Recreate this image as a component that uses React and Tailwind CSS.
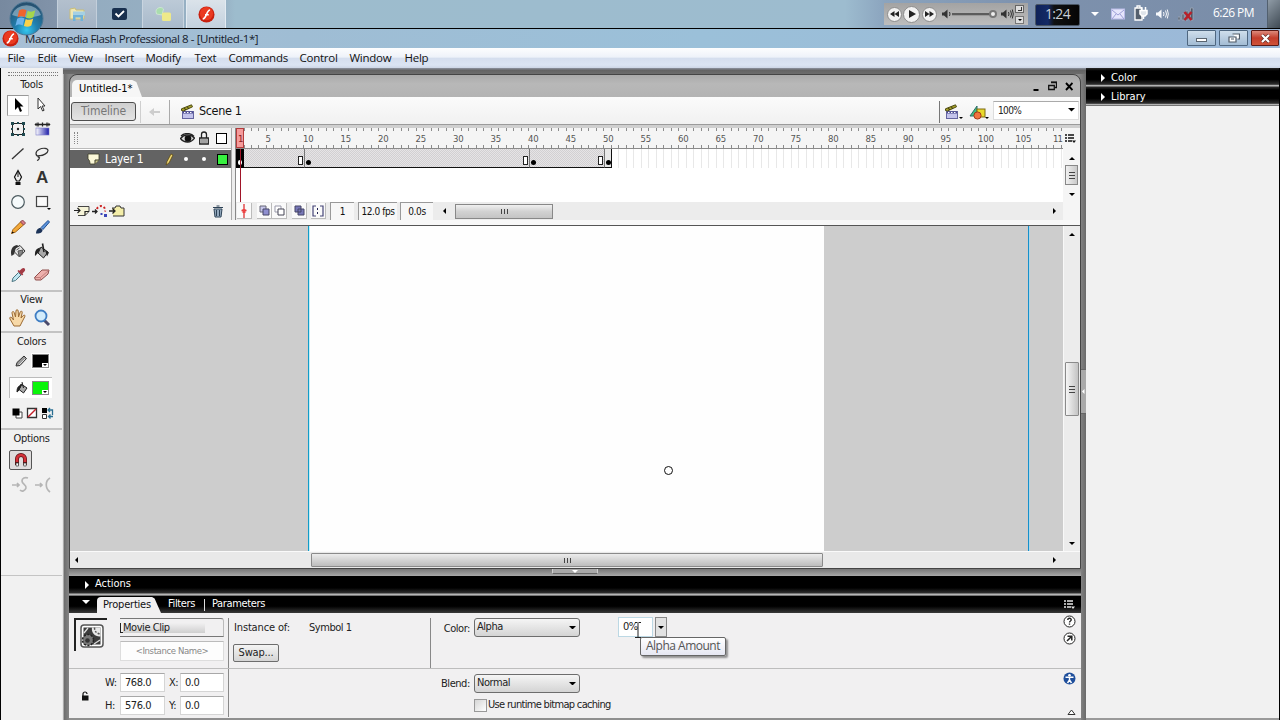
import React from 'react';

const MENUS = [
  ['File', 'w-[30px]'],
  ['Edit', 'w-[31px]'],
  ['View', 'w-[36px]'],
  ['Insert', 'w-[41px]'],
  ['Modify', 'w-[49px]'],
  ['Text', 'w-[34px]'],
  ['Commands', 'w-[71px]'],
  ['Control', 'w-[50px]'],
  ['Window', 'w-[55px]'],
  ['Help', 'w-[40px]'],
];

const RULER = Array.from({ length: 21 }, (_, i) => (i + 1) * 5);

const Svg = ({ w = 18, h = 18, className = '', children }) => (
  <svg width={w} height={h} viewBox={`0 0 ${w} ${h}`} className={`block shrink-0 ${className}`} fill="none">
    {children}
  </svg>
);

const Arrow = ({ dir = 'down', color = '#000', s = 4, className = '' }) => {
  const points = {
    down: `0,0 ${s * 2},0 ${s},${s}`,
    up: `0,${s} ${s * 2},${s} ${s},0`,
    left: `${s},0 ${s},${s * 2} 0,${s}`,
    right: `0,0 0,${s * 2} ${s},${s}`,
  };
  const vertical = dir === 'down' || dir === 'up';
  return (
    <Svg w={vertical ? s * 2 : s} h={vertical ? s : s * 2} className={className}>
      <polygon points={points[dir]} fill={color} />
    </Svg>
  );
};

const FlashLogo = ({ size = 17 }) => (
  <svg width={size} height={size} viewBox="0 0 18 18" className="block shrink-0">
    <circle cx="9" cy="9" r="8.5" fill="#c8200f" />
    <circle cx="9" cy="8" r="7" fill="#ea3a20" />
    <path d="M12.8 4.2c-4 0-3.600 9.400-7.800 9.600M7.400 9.300h4" stroke="#fff" strokeWidth="1.700" fill="none" />
  </svg>
);

const Clapper = () => (
  <Svg w={16} h={16}>
    <rect x="2.500" y="7.500" width="11" height="7" fill="#c3c3ec" stroke="#6464a0" />
    <path d="M3 8.500h10" stroke="#4a4a90" strokeWidth="2" />
    <path d="M4 8.500h1.500M7 8.500h1.500M10 8.500h1.500" stroke="#fff" strokeWidth="1" />
    <path d="M1.500 6.500V4.800L11.500 .8l1 2L3.500 7z" fill="#a7a22a" stroke="#4d4a12" />
    <path d="M4.500 4l1 2M7.500 2.800l1 2" stroke="#33300c" />
  </Svg>
);

/* ---------- taskbar ---------- */

const StartOrb = () => (
  <div className="absolute left-[9px] top-[1px] z-10">
    <svg width="35" height="35" viewBox="0 0 35 35">
      <defs>
        <radialGradient id="orb" cx="50%" cy="85%" r="80%">
          <stop offset="0" stopColor="#35c8ef" />
          <stop offset=".4" stopColor="#2080b0" />
          <stop offset="1" stopColor="#27506f" />
        </radialGradient>
      </defs>
      <circle cx="17.500" cy="17.500" r="16.500" fill="url(#orb)" stroke="#4b7795" />
      <path d="M3 14a15 13 0 0 1 29 0c-8 3-21 3-29 0z" fill="#c3d6e0" opacity=".5" />
      <path d="M10 9.500c3-2 5-1.500 7.500-.3l-1.700 7c-2.500-1.200-4.500-1.200-7.300.5z" fill="#f0642c" />
      <path d="M18.700 9.800c2.500 1.200 4.700 1.200 7.600-.5l-1.900 7c-2.700 1.500-4.800 1.500-7.400.4z" fill="#a5d64c" />
      <path d="M8.200 17.800c2.800-1.600 4.800-1.600 7.300-.3l-1.800 7c-2.600-1.200-4.500-1.300-7.300.4z" fill="#6ab2ec" />
      <path d="M16.700 18c2.500 1.200 4.700 1.200 7.500-.4l-1.900 7c-2.700 1.500-4.800 1.500-7.400.4z" fill="#fbd24a" />
    </svg>
  </div>
);

const MediaButton = ({ children, big }) => (
  <div className={`${big ? 'w-[17px] h-[17px]' : 'w-[15px] h-[15px]'} rounded-full bg-[#f2f2f2] border border-[#8c8c8c] flex items-center justify-center`}>
    {children}
  </div>
);

const Speaker = ({ color = '#333', waves = 0 }) => (
  <Svg w={14} h={12}>
    <path d="M1 4.500h2L6.500 1.500v9L3 7.500H1z" fill={color} />
    {waves > 0 && <path d="M8.500 4q1 2 0 4" stroke={color} />}
    {waves > 1 && <path d="M10.500 2.500q2 3.500 0 7" stroke={color} />}
    {waves > 2 && <path d="M12.300 1.500q2 4.500 0 9" stroke={color} />}
  </Svg>
);

const Taskbar = () => (
  <div className="h-[28px] shrink-0 flex bg-[linear-gradient(90deg,#77899f_0,#8193a9_55px,#93abbf_75px,#98b2c5_225px,#9dbccd_235px,#9dbccf_845px,#8ba4be_885px,#7d91ad_1030px,#7a8da8_1280px)]">
    <div className="w-[57px] shrink-0" />
    <div className="w-[40px] border border-[#c3cfdb] border-y-0 bg-[linear-gradient(#b3c0cd,#a3b3c5)] flex items-center justify-center">
      <Svg w={18} h={16}>
        <path d="M2 3l5-1 1 2h8v9H2z" fill="#efe8b4" stroke="#c9bd78" />
        <path d="M5 5.500h12v4H5z" fill="#a4d0e4" />
        <path d="M5 15V9h10v6h-2.500v-3.500h-5V15z" fill="#6fb2d8" />
      </Svg>
    </div>
    <div className="w-[45px] flex items-center justify-center">
      <div className="w-[15px] h-[12px] rounded-[2px] bg-[#18304f] flex items-center justify-center">
        <Svg w={11} h={8}>
          <path d="M1.500 3.500l3 3L10 1" stroke="#fff" strokeWidth="1.800" />
        </Svg>
      </div>
    </div>
    <div className="w-[42px] border border-[#c9d5e0] border-y-0 bg-[linear-gradient(#bccad7,#a9bacb)] flex items-center justify-center">
      <Svg w={18} h={16}>
        <path d="M2 5.500C2 2 7 0 9.500 3L8 9 2.500 8z" fill="#a9dcae" stroke="#d8eed8" strokeWidth=".7" />
        <rect x="8" y="6.500" width="9" height="8.500" rx="1.500" fill="#eee98a" />
      </Svg>
    </div>
    <div className="w-[2px]" />
    <div className="w-[40px] border border-[#e3ebf2] border-y-0 bg-[linear-gradient(#dbe3ea,#c3d1de)] flex items-center justify-center">
      <FlashLogo />
    </div>
    <div className="flex-1" />
    <div className="w-[144px] h-[22px] mt-[3px] bg-[linear-gradient(#a3a3a3,#bdbdbd)] flex items-center pl-[3px]">
      <MediaButton>
        <Svg w={9} h={6}><path d="M4.500 0v6L0 3zM9 0v6L4.500 3z" fill="#222" /></Svg>
      </MediaButton>
      <div className="w-px" />
      <MediaButton big>
        <Svg w={8} h={8}><path d="M1 0l7 4-7 4z" fill="#222" /></Svg>
      </MediaButton>
      <div className="w-[2px]" />
      <MediaButton>
        <Svg w={9} h={6}><path d="M0 0v6l4.500-3zM4.500 0v6L9 3z" fill="#222" /></Svg>
      </MediaButton>
      <div className="w-[4px]" />
      <Speaker waves={1} />
      <div className="w-[38px] h-[3px] -ml-[3px] bg-[#5c5c5c] border-b border-[#999]" />
      <div className="w-[8px] h-[8px] -ml-px rounded-full bg-[#eee] border-2 border-[#777]" />
      <div className="w-[3px]" />
      <Speaker waves={3} />
      <div className="flex flex-col gap-[3px] ml-px">
        <div className="w-[9px] h-[8px] border border-[#666] bg-[#ddd] flex items-center justify-center">
          <div className="w-[4px] h-[4px] border-r border-b border-[#333]" />
        </div>
        <div className="w-[9px] h-[8px] border border-[#777] bg-[#ddd] flex items-center justify-center">
          <Arrow s={2} />
        </div>
      </div>
    </div>
    <div className="w-[45px] h-[22px] mt-[4px] ml-[7px] rounded-[2px] border border-[#4a5664] bg-[linear-gradient(90deg,#0f2258_0,#142a66_28%,#111_42%,#050505)] text-[#c9d0d8] text-[14px] leading-[18px] text-center tracking-[-0.7px]">
      1:24
    </div>
    <div className="flex items-center ml-[11px] -mt-[1px]">
      <Arrow color="#fff" />
      <Svg w={14} h={12} className="ml-[12px]">
        <rect x=".5" y="1" width="13" height="10" fill="#e6e6fc" stroke="#b9bbe8" />
        <path d="M1 2l6 5 6-5M1 11l4-5M13 11L9 6" stroke="#9c9fd6" />
      </Svg>
      <Svg w={16} h={17} className="ml-[8px]">
        <path d="M2 3h7v12H2zM4 1h3v2H4z" fill="#55606e" stroke="#fff" strokeWidth="1.300" />
        <path d="M7 5.500h7v3.500l-2 2H9L7 9zM8.500 2v3M12.500 2v3M10.500 11v3" stroke="#fff" strokeWidth="1.500" fill="#dfe4ea" />
      </Svg>
      <div className="ml-[6px]"><Speaker color="#f6f8fb" waves={3} /></div>
      <Svg w={16} h={14} className="ml-[9px]">
        <path d="M0 10h2v3H0zM4 7h2v6H4zM8 4h2v9H8zM12.500 1h2.500v12h-2.500z" fill="#4f5b6b" stroke="#a3adba" strokeWidth=".7" />
        <path d="M6.500 5l7 8M13.500 5l-7 8" stroke="#b8202a" strokeWidth="2.500" />
      </Svg>
    </div>
    <div className="w-[73px] pl-[19px] text-[12px] leading-[26px] text-white tracking-[-0.55px] whitespace-nowrap">6:26 PM</div>
    <div className="w-[13px] border-l border-[#52606f] bg-[linear-gradient(135deg,#8f9ba6,#3f4a54)]" />
  </div>
);

/* ---------- title and menu bars ---------- */

const TitleBar = () => (
  <div className="h-[20px] shrink-0 flex border-t border-black bg-[linear-gradient(90deg,#a8bfd5_0,#9fbdd4_300px,#9bc0d9_700px,#9bbcd8_1000px,#9cb8d8_1280px)] pl-[2px]">
    <div className="mt-px"><FlashLogo /></div>
    <div className="ml-[6px] text-[11.5px] leading-[19px] text-[#16202c] tracking-[-0.43px] whitespace-nowrap flex-1">
      Macromedia Flash Professional 8 - [Untitled-1*]
    </div>
    <div className="flex gap-[3px] pt-px pr-[1px]">
      <div className="w-[29px] h-[16px] border border-[#4f6780] rounded-[1px] bg-[linear-gradient(#cfdeeb,#a3bcd4)] flex items-center justify-center">
        <div className="w-[11px] h-[4px] mt-[4px] border border-[#5a6570] bg-white" />
      </div>
      <div className="w-[29px] h-[16px] border border-[#4f6780] rounded-[1px] bg-[linear-gradient(#cfdeeb,#a3bcd4)] flex items-center justify-center">
        <Svg w={12} h={10}>
          <path d="M4.500 1h7v5h-2M1 4h7v5H1z" fill="#fff" stroke="#515c68" strokeWidth="1.200" />
          <path d="M3 6h3" stroke="#515c68" />
        </Svg>
      </div>
      <div className="w-[28px] h-[16px] border border-[#5c1a16] rounded-[1px] bg-[linear-gradient(#dd8a7c,#c43d2c_50%,#cf5238)] flex items-center justify-center">
        <Svg w={11} h={9}>
          <path d="M2 1l7 7M9 1L2 8" stroke="#5a2a28" strokeWidth="3.400" />
          <path d="M2 1l7 7M9 1L2 8" stroke="#fff" strokeWidth="2.200" />
        </Svg>
      </div>
    </div>
  </div>
);

const MenuBar = () => (
  <div className="h-[20px] shrink-0 flex pl-[7.5px] bg-[linear-gradient(#fdfdfe_0,#eef2f9_45%,#d5deee_52%,#dbe4f3_85%,#cdd6e6)] text-[11.5px] leading-[20px] text-[#111] tracking-[-0.25px]">
    {MENUS.map(([name, width]) => (
      <div key={name} className={`${width} shrink-0 whitespace-nowrap`}>{name}</div>
    ))}
  </div>
);

/* ---------- tools panel ---------- */

const TOOLS = [
  // selection, subselection
  <Svg key="a"><path d="M6 2v12l3-3 2 5 2-1-2-4.500h3.500z" fill="#000" /></Svg>,
  <Svg key="b"><path d="M5 2v11l2.600-2.500 2 4.500 1.500-.7-2-4.300H12z" fill="#fff" stroke="#333" /></Svg>,
  // free transform, gradient transform
  <Svg key="c">
    <rect x="3.500" y="3.500" width="11" height="11" stroke="#222" />
    <path d="M2 2h3v3H2zM13 2h3v3h-3zM2 13h3v3H2zM13 13h3v3h-3zM8 2h2v2H8zM8 14h2v2H8zM2 8h2v2H2zM14 8h2v2h-2z" fill="#1f4a50" />
    <circle cx="9" cy="9" r="1.200" fill="#222" />
  </Svg>,
  <Svg key="d">
    <defs><linearGradient id="grad"><stop stopColor="#fff" /><stop offset="1" stopColor="#1c1ca8" /></linearGradient></defs>
    <rect x="3" y="8" width="13" height="7" fill="url(#grad)" stroke="#7a7ac8" strokeWidth=".6" />
    <path d="M3.500 2.500v4l-2-2zM15.500 2.500v4l2-2z" fill="#222" />
    <path d="M3 4.500h13M5 2.500v4M9.500 2.500v4M14 2.500v4" stroke="#222" strokeWidth="1.300" />
  </Svg>,
  // line, lasso
  <Svg key="e"><path d="M3 14L14.500 3.500" stroke="#333" strokeWidth="1.300" /></Svg>,
  <Svg key="f"><path d="M6 11.500c-4-.5-4-5 0-7s9-1.500 9 1-5 5.500-9 5c-2 0-1 2.500 1 1.500M6 12c1 1.500-.5 3-2 3.500" stroke="#333" strokeWidth="1.200" /></Svg>,
  // pen, text
  <Svg key="g">
    <path d="M9 1.500L5.500 8l2 4h3l2-4z" fill="#eee" stroke="#111" strokeWidth="1.200" />
    <path d="M9 2v6" stroke="#111" /><path d="M6.500 13h5v3h-5z" fill="#111" />
  </Svg>,
  <span key="h" className="w-[18px] text-center text-[17px] leading-[18px] font-bold text-[#333] font-['Liberation_Sans']">A</span>,
  // oval, rectangle
  <Svg key="i"><circle cx="9" cy="9" r="6.300" fill="#f6fafb" stroke="#4d5b60" strokeWidth="1.200" /></Svg>,
  <Svg key="j">
    <rect x="3.500" y="3.500" width="11" height="10" fill="#fafafa" stroke="#444" strokeWidth="1.200" />
    <path d="M14 15h4l-2 2z" fill="#000" />
  </Svg>,
  // pencil, brush
  <Svg key="k">
    <path d="M2.500 15.500L4 11.500 12 3.500l3 3-8.500 7.500z" fill="#f3a93a" stroke="#a0600f" />
    <path d="M11.500 4l2-2 3 3-2 2z" fill="#d97a86" stroke="#8c4850" /><path d="M2.500 15.500l1-2 1.500 1.200z" fill="#000" />
  </Svg>,
  <Svg key="l">
    <path d="M8 9.500L15 2.500l1.500 1.500-6.500 7.500z" fill="#5b93dc" stroke="#1f4f93" />
    <path d="M3 15.500c0-3 1.500-5.500 4.500-5.500l2 2c0 3-3.500 3.500-6.500 3.500z" fill="#1c3358" />
  </Svg>,
  // ink bottle, paint bucket
  <Svg key="m">
    <path d="M6 6l5-2.500L16 9l-5.500 6L5.500 10z" fill="#e6e6e6" stroke="#333" />
    <path d="M7.500 8l3-2M9 9l5-1-1 4-3 2z" fill="#888" stroke="#555" /><path d="M2.500 14C1 8 3 4 8 3l2 1.500C6 6 5 8.500 5.500 12z" fill="#333" />
  </Svg>,
  <Svg key="n">
    <path d="M8 5l7 5-4.500 6L5 11z" fill="#aaa" stroke="#222" /><path d="M9.500 1.500l1.500 8.500" stroke="#222" strokeWidth="1.600" />
    <path d="M2 14c-.5-5 1-7.500 5-8.500L6.500 9c-1.500 1-2 3-4.500 5zM12 8l4 2.500-2 4z" fill="#222" />
  </Svg>,
  // eyedropper, eraser
  <Svg key="o">
    <path d="M3 15.500L4 12l5.500-5.500 2.500 2.500-5.500 5.500z" fill="#bfe6f0" stroke="#4d7682" />
    <path d="M8.500 5l1-1 1 .8L13 2.500c2-1.500 4 .5 2.800 2.500L13.500 7.500l.8 1-1.300 1z" fill="#a33a44" />
  </Svg>,
  <Svg key="p">
    <path d="M1.500 11.500L9 4h7l-1 4-7 6H2.500z" fill="#eeb0ac" stroke="#8d4c4a" /><path d="M2 11.500h5.500L15.500 4.500M7.500 11.500v2.500" stroke="#c47f7c" />
  </Svg>,
];

const ToolHeading = ({ children, className = '' }) => (
  <div className={`text-center h-[14px] leading-[14px] text-[11px] text-[#222] ${className}`}>{children}</div>
);

const Rule = ({ className = '' }) => <div className={`h-[2px] bg-[#c3c3c3] ${className}`} />;

const ToolsPanel = () => (
  <div className="w-[62px] shrink-0 border-l border-black bg-[#f1f1f1] flex flex-col font-['DejaVu_Sans_Condensed','DejaVu_Sans',sans-serif] tracking-[-0.3px]">
    <div className="h-[4px] mt-[4px] ml-[7px] w-[50px] border-y border-dotted border-[#777]" />
    <ToolHeading className="mt-[2px]">Tools</ToolHeading>
    <div className="grid grid-cols-[24px_24px] auto-rows-[24.3px] pl-[5px] pt-px">
      {TOOLS.map((icon, i) => (
        <div key={i} className="flex items-center justify-center">
          {i === 0 ? (
            <div className="w-[22px] h-[21px] bg-white border border-[#d2d2d2] border-l-[#999] border-t-[#999] flex items-center justify-center">{icon}</div>
          ) : icon}
        </div>
      ))}
    </div>
    <Rule className="mt-[3px]" />
    <ToolHeading className="mt-px">View</ToolHeading>
    <div className="flex pl-[7px] gap-[6px] mt-px">
      <Svg w={19} h={20}>
        <path d="M6 18L2 11c-1-2 1-2.500 2-1L5.500 12 4 5c0-2 2-2 2.300 0L7.500 9 8 3c0-1.800 2-1.800 2.200 0l.3 6 1.700-5c.8-1.600 2.300-.8 2 .8L13 10l2.300-2.500c1.300-1 2.200 0 1.400 1.400L14 14l-2 4z" fill="#f7d9a8" stroke="#9c6a32" />
      </Svg>
      <Svg w={19} h={19}>
        <path d="M11 12l5 5" stroke="#4a4a6a" strokeWidth="3" />
        <circle cx="8" cy="8" r="5.500" fill="#d3ecfb" stroke="#3f7ec4" strokeWidth="1.800" />
      </Svg>
    </div>
    <Rule className="mt-[3px]" />
    <ToolHeading className="mt-[2px]">Colors</ToolHeading>
    <div className="flex items-center h-[20px] pl-[12px] mt-[2px]">
      <Svg w={16} h={16}><path d="M3 13l1-3.500L11 3l2.500 2.500L7 12.500z" fill="#999" stroke="#333" /><path d="M6 12l6-6" stroke="#ddd" /></Svg>
      <div className="ml-[3px] w-[17px] h-[14px] bg-black border border-[#888] outline outline-white flex items-end justify-end">
        <div className="w-[6px] h-[4px] bg-white flex items-center justify-center"><Arrow s={2} /></div>
      </div>
    </div>
    <div className="flex items-center h-[21px] w-[43px] ml-[8px] pl-[4px] mt-[6px] bg-white border-t border-l border-[#bbb]">
      <Svg w={16} h={16}>
        <path d="M7 4l6 4-3.500 5L5 9.500z" fill="#aaa" stroke="#222" /><path d="M3 12c0-4 1-6 4.500-7L6 8c-1 1-1 3-3 4zM8 2l1.500 6" fill="#222" stroke="#222" />
      </Svg>
      <div className="ml-[2px] w-[17px] h-[14px] bg-[#0af50a] border border-[#888] flex items-end justify-end">
        <div className="w-[6px] h-[4px] bg-white flex items-center justify-center"><Arrow s={2} /></div>
      </div>
    </div>
    <div className="flex h-[14px] items-center pl-[10px] gap-[3px] mt-[8px]">
      <Svg w={12} h={12}><path d="M5 5h6v6H5z" fill="#fff" stroke="#444" /><path d="M1.500 1.500h7v7h-7z" fill="#000" /></Svg>
      <Svg w={12} h={12}><path d="M1.500 1.500h9v9h-9z" fill="#fff" stroke="#333" strokeWidth="1.300" /><path d="M2 10l8-8" stroke="#c4202a" strokeWidth="1.500" /></Svg>
      <Svg w={14} h={12}>
        <path d="M1 1h5v5H1z" fill="#000" /><path d="M1.500 7.500h4v4h-4z" fill="#fff" stroke="#333" />
        <path d="M7 3h4.500v5M7.500 9.500H12M9 1L7 3l2 2M9.500 7.500l-2 2 2 2" stroke="#2a6f92" strokeWidth="1.300" />
      </Svg>
    </div>
    <Rule className="mt-[8px]" />
    <ToolHeading className="mt-[2px]">Options</ToolHeading>
    <div className="w-[23px] h-[20px] ml-[8px] mt-[4px] border border-[#555] rounded-[2px] bg-[#dedcdc] flex items-center justify-center">
      <Svg w={14} h={14}>
        <path d="M3 12V6a4 4 0 0 1 8 0v6" stroke="#5a1414" strokeWidth="4" /><path d="M3 9V6a4 4 0 0 1 8 0v3" stroke="#d33038" strokeWidth="2.600" />
        <path d="M2 10h2.500v3H2zM9.700 10h2.500v3H9.700z" fill="#fff" stroke="#333" strokeWidth=".7" />
      </Svg>
    </div>
    <div className="flex pl-[11px] mt-[6px] gap-[5px]">
      <Svg w={18} h={18}><path d="M0 9h7M5 7l2 2-2 2M16 2c-3-1-6 0-6 3s5 4 4 7-4 4-6 2" stroke="#b5b5b5" strokeWidth="1.700" /></Svg>
      <Svg w={18} h={18}><path d="M0 9h7M5 7l2 2-2 2M15 2c-5 3-5 10 0 14" stroke="#b5b5b5" strokeWidth="1.700" /></Svg>
    </div>
    <div className="h-[82px] border-b border-[#c4c4c4]" />
  </div>
);

/* ---------- document window ---------- */

const DocTabs = () => (
  <div className="h-[22px] shrink-0 flex items-end rounded-t-[7px] bg-[linear-gradient(#a9a9a9,#b8b8b8_40%,#b3b3b3)] pl-[2px]">
    <div className="w-[70px] h-[17px] bg-[#f6f6f6] rounded-tl-[5px] pl-[7px] text-[11px] leading-[17px] tracking-[-0.05px] whitespace-nowrap [clip-path:polygon(0_0,86%_0,92%_12%,100%_100%,0_100%)]">
      Untitled-1*
    </div>
    <div className="flex-1" />
    <div className="flex items-center gap-[8px] pr-[7px] pb-[6px]">
      <Svg w={8} h={10}><path d="M1.500 9h5" stroke="#000" strokeWidth="2" /></Svg>
      <Svg w={9} h={10}><path d="M3 1.500h5.500v5H7M.7 4.500h5.600v4H.7z" stroke="#111" strokeWidth="1.300" /><path d="M3 1.300h6" stroke="#111" strokeWidth="1.600" /></Svg>
      <Svg w={8} h={10}><path d="M1 2l6.500 7M7.500 2L1 9" stroke="#000" strokeWidth="1.900" /></Svg>
    </div>
  </div>
);

const SceneBar = () => (
  <div className="h-[28px] shrink-0 flex items-center bg-[linear-gradient(#fbfbfb,#f1f1f1)] border-b border-[#9b9b9b] pt-[2px]">
    <div className="w-[65px] h-[19px] ml-[1px] rounded-[3px] border-[1.500px] border-[#4e4e4e] bg-[linear-gradient(#cfcfcf,#e4e4e4)] text-center text-[12px] leading-[16px] text-[#777] tracking-[-0.1px]">
      Timeline
    </div>
    <div className="w-px h-[22px] bg-[#cfcfcf] ml-[4px]" />
    <Svg w={13} h={10} className="ml-[7px]"><path d="M6 1v3h6v2H6v3L1 5z" fill="#cdcdcd" /></Svg>
    <div className="w-px h-[24px] bg-[#aaa] ml-[8px]" />
    <div className="ml-[10px]"><Clapper /></div>
    <div className="ml-[3px] text-[12.5px] text-[#111] tracking-[-0.35px] flex-1">Scene 1</div>
    <div className="w-px h-[22px] bg-[#777]" />
    <div className="ml-[4px]"><Clapper /></div>
    <Arrow s={2} className="mt-[13px] -ml-px" />
    <Svg w={17} h={16} className="ml-[6px]">
      <path d="M1 12L8 2v10z" fill="#3fbe82" stroke="#2b6e6a" /><rect x="8" y="5" width="8" height="8" fill="#e9d92c" stroke="#7c6a12" />
      <circle cx="8.500" cy="11.500" r="3.600" fill="#f07440" stroke="#a33b17" />
    </Svg>
    <Arrow s={2} className="mt-[13px] -ml-px" />
    <div className="w-[86px] h-[19px] ml-[4px] mr-px mb-[3px] bg-white border border-[#ddd] border-t-[#aaa] flex items-center justify-between pl-[4px] pr-[3px] text-[10px] tracking-[-0.6px] text-[#222]">
      100%
      <Arrow s={3.5} />
    </div>
  </div>
);

const Keyframe = ({ className, last }) => (
  <div className={`${className} shrink-0 flex items-end justify-between pb-[2px] border-b border-[#111] ${last ? 'border-r bg-[#e8e8e8]' : 'bg-[conic-gradient(#d2d0d2_25%,#e6e4e6_0_50%,#d2d0d2_0_75%,#e6e4e6_0)] bg-size-[2px_2px]'}`}>
    <div className="w-[5px] h-[5px] ml-px rounded-full bg-black" />
    {!last && <div className="w-[5px] h-[9px] mr-px bg-white border border-[#222]" />}
  </div>
);

const LayersPane = () => (
  <div className="w-[162px] shrink-0 flex flex-col bg-white border-r border-[#aaa]">
    <div className="h-[21px] flex items-center bg-[#f2f2f2] border-b border-[#bbb]">
      <div className="w-[4px] h-[12px] ml-[4px] border-x border-dotted border-[#888]" />
      <Svg w={15} h={11} className="ml-[102px]">
        <path d="M.5 5.500C4 1 10 .5 14.500 5c-3.500 5-10 5.500-14 .5z" fill="#ddd" stroke="#222" strokeWidth="1.300" />
        <circle cx="8" cy="5.500" r="3.300" fill="#111" /><path d="M1 3c4-3.500 10-3 13 .5" stroke="#222" strokeWidth="1.500" />
      </Svg>
      <Svg w={10} h={14} className="ml-[4px]">
        <path d="M2.500 7V3.500a2.500 2.500 0 0 1 5 0V7" stroke="#222" strokeWidth="1.300" /><path d="M.7 7h8.600v6H.7z" fill="#eee" stroke="#222" strokeWidth="1.300" />
        <path d="M2 9h6M2 11h6" stroke="#555" />
      </Svg>
      <div className="w-[11px] h-[11px] ml-[7px] border-[1.500px] border-black bg-white" />
    </div>
    <div className="h-[18px] mt-px flex items-center bg-[#636363] text-white">
      <Svg w={13} h={12} className="ml-[17px]">
        <path d="M1 1h11v6L8 11H3c0-2-.5-4-2-5z" fill="#fbf8d8" stroke="#3d3d2a" strokeWidth=".8" /><path d="M8 11V7h4" fill="#ccc68a" stroke="#3d3d2a" />
      </Svg>
      <div className="ml-[5px] w-[60px] text-[12px] leading-[19px] tracking-[-0.3px] whitespace-nowrap">Layer 1</div>
      <Svg w={9} h={13}><path d="M1 12l1-3.500L6 1l2 1-4 8z" fill="#f1d977" stroke="#5c4a12" strokeWidth=".8" /></Svg>
      <div className="w-[4px] h-[4px] ml-[10px] rounded-full bg-white" />
      <div className="w-[4px] h-[4px] ml-[14px] rounded-full bg-white" />
      <div className="w-[11px] h-[11px] ml-[11px] border border-black bg-[#37f03f]" />
    </div>
    <div className="h-[34px]" />
    <div className="h-[18px] bg-[#f2f2f2] flex items-center">
      <Svg w={16} h={14} className="ml-[4px]">
        <path d="M4 2.500h11v5l-4 4H4" fill="#f6f4d8" stroke="#333" strokeWidth=".9" /><path d="M0 6.500h6M3.500 4L6 6.500 3.500 9M11 11.500v-4h4" stroke="#222" strokeWidth="1.200" />
      </Svg>
      <Svg w={16} h={14} className="ml-[2px]">
        <path d="M5 5a4 4 0 0 1 8 2.500" stroke="#c22" strokeWidth="2" strokeDasharray="2 2" /><path d="M0 7.500h5M3 5.500l2 2-2 2" stroke="#222" strokeWidth="1.300" />
        <path d="M8.500 9h2v2h-2zM12 10h3v3h-3z" fill="#3b45b8" />
      </Svg>
      <Svg w={17} h={14} className="ml-px">
        <path d="M3 4h3l1-2h4l1 2h3v8H4" fill="#f3eda8" stroke="#333" /><path d="M0 7h6M3.500 4.500L6 7 3.500 9.500" stroke="#222" strokeWidth="1.300" />
      </Svg>
      <Svg w={12} h={14} className="ml-[86px]">
        <path d="M2 5h8l-1 8H3z" fill="#9fb4c8" stroke="#2d4256" /><path d="M1 3.500h10M4.500 2h3M4.500 6v6M7.500 6v6" stroke="#2d4256" strokeWidth="1.200" />
      </Svg>
    </div>
  </div>
);

const OnionButton = ({ children, className = '' }) => (
  <div className={`w-[15px] h-[16px] bg-[#fafafa] border-r border-b border-[#bbb] flex items-center justify-center ${className}`}>{children}</div>
);

const FramesPane = () => (
  <div className="w-[827px] shrink-0 flex flex-col bg-white relative overflow-hidden">
    <div className="h-[21px] bg-[#f5f5f5] border-b border-[#8a8a8a] bg-[repeating-linear-gradient(90deg,#8c8c8c_0,#8c8c8c_1px,transparent_1px,transparent_7.5px)] flex flex-col">
      <div className="h-[3px]" />
      <div className="h-[14px] bg-[#f5f5f5] flex text-[9.5px] leading-[15px] text-[#555] tracking-[-0.2px]">
        <div className="w-[29.5px] shrink-0" />
        {RULER.map((n) => (
          <div key={n} className="w-[37.5px] shrink-0">{n}</div>
        ))}
        <div className="w-[9px] tracking-[-1px]">11</div>
      </div>
    </div>
    <div className="h-[19px] flex bg-[repeating-linear-gradient(90deg,#e8e8e8_0,#e8e8e8_1px,transparent_1px,transparent_7.5px)]">
      <div className="w-[7.5px] shrink-0 bg-black flex items-end justify-center pb-[3px]">
        <div className="w-[4px] h-[5px] rounded-full bg-white" />
      </div>
      <div className="w-[60px] shrink-0 flex items-end justify-end pb-[2px] border-b border-[#111] bg-[conic-gradient(#d2d0d2_25%,#e6e4e6_0_50%,#d2d0d2_0_75%,#e6e4e6_0)] bg-size-[2px_2px]">
        <div className="w-[5px] h-[9px] mr-px bg-white border border-[#222]" />
      </div>
      <Keyframe className="w-[225px] border-l border-l-[#777]" />
      <Keyframe className="w-[75px] border-l border-l-[#777]" />
      <Keyframe className="w-[8px] border-l border-l-[#777]" last />
    </div>
    <div className="h-[34px]" />
    <div className="h-[18px] flex items-center bg-[#ececec] text-[10px] tracking-[-0.4px] text-[#111]">
      <OnionButton className="ml-px">
        <Svg w={8} h={14}><path d="M4 0v14M1.500 6.500h5" stroke="#d33" strokeWidth="1.300" /><path d="M2.500 5h3v4h-3z" fill="#e44" /></Svg>
      </OnionButton>
      <OnionButton className="ml-[5px]">
        <Svg w={11} h={11}><path d="M1 1h6v6H1z" fill="#c7c7ea" stroke="#667" /><path d="M4 4h6v6H4z" fill="#8f8fd0" stroke="#446" /></Svg>
      </OnionButton>
      <OnionButton>
        <Svg w={11} h={11}><path d="M1 1h6v6H1z" fill="#fff" stroke="#99a" /><path d="M4 4h6v6H4z" fill="#fff" stroke="#445" /></Svg>
      </OnionButton>
      <OnionButton className="ml-[5px]">
        <Svg w={11} h={11}><path d="M1 1h6v6H1zM4 4h6v6H4z" fill="#7878b8" stroke="#446" /></Svg>
      </OnionButton>
      <OnionButton className="ml-[4px]">
        <Svg w={12} h={12}><path d="M4 1H1v10h3M8 1h3v10H8" stroke="#447" strokeWidth="1.200" /><path d="M5.500 3v2M5.500 7v2" stroke="#225" /></Svg>
      </OnionButton>
      <div className="w-[24px] h-[18px] ml-[4px] bg-[#f7f7f7] border-l border-t border-[#999] text-center leading-[18px]">1</div>
      <div className="w-[39px] h-[18px] ml-[4px] bg-[#f7f7f7] border-l border-t border-[#999] text-center leading-[18px]">12.0 fps</div>
      <div className="w-[33px] h-[18px] ml-[3px] bg-[#f7f7f7] border-l border-t border-[#999] text-center leading-[18px]">0.0s</div>
      <Arrow dir="left" s={3} className="ml-[10px]" />
      <div className="w-[98px] h-[15px] ml-[9px] border border-[#888] bg-[linear-gradient(#f0f0f0,#d2d2d2_50%,#c4c4c4)] flex items-center justify-center">
        <Grip />
      </div>
      <div className="flex-1" />
      <Arrow dir="right" s={3} className="mr-[7px]" />
    </div>
    {/* playhead */}
    <div className="absolute left-0 top-0 w-[8px] h-[20px] bg-[#f58b8b]/85 border border-[#b33c3c] text-[9.5px] leading-[19px] text-[#8c2020] pl-px">1</div>
    <div className="absolute left-[4px] top-[21px] w-px h-[53px] bg-[#a01428]" />
  </div>
);

const Grip = ({ vertical }) => (
  <div className={`flex gap-[2px] ${vertical ? 'flex-col' : ''}`}>
    {[0, 1, 2].map((i) => (
      <div key={i} className={`bg-[#444] ${vertical ? 'w-[6px] h-px' : 'w-px h-[5px]'}`} />
    ))}
  </div>
);

const PanelMenuIcon = ({ color = '#111' }) => (
  <Svg w={13} h={11}>
    <path d="M1 2h2M1 5h2M1 8h2M4 2h6M4 5h6M4 8h4" stroke={color} strokeWidth="1.300" /><path d="M8 7.500h4l-2 2.500z" fill={color} />
  </Svg>
);

const Timeline = () => (
  <div className="h-[101px] shrink-0 bg-[#fafafa] border-t-[3px] border-[#cfcfcf] border-b-0 flex flex-col">
    <div className="flex h-[92px] shrink-0">
      <LayersPane />
      <div className="w-[4px] shrink-0 bg-[#ededed] border-r border-[#888]" />
      <FramesPane />
      <div className="flex-1 flex flex-col bg-[#f5f5f5] items-center">
        <div className="h-[21px] pt-[5px] pr-[3px]"><PanelMenuIcon /></div>
        <Arrow dir="up" s={3} className="mt-[8px]" />
        <div className="w-[13px] h-[20px] mt-[5px] border border-[#888] bg-[linear-gradient(90deg,#f0f0f0,#c9c9c9)] flex items-center justify-center">
          <Grip vertical />
        </div>
        <Arrow dir="down" s={3} className="mt-[8px]" />
      </div>
    </div>
    <div className="h-[5px] bg-[#f8f8f8]" />
    <div className="h-px bg-[#555]" />
  </div>
);

const Stage = () => (
  <div className="h-[325px] shrink-0 flex">
    <div className="w-[993px] shrink-0 bg-[#cdcdcd] flex">
      <div className="w-[238px] shrink-0" />
      <div className="w-px shrink-0 bg-[#129cc8]" />
      <div className="w-[515px] shrink-0 bg-[linear-gradient(90deg,#c4eef8_1px,#fefefe_1px)] relative">
        <div className="absolute left-[355px] top-[240px] w-[9px] h-[9px] rounded-full border border-[#111] bg-white" />
      </div>
      <div className="w-[204px] shrink-0" />
      <div className="w-px bg-[#1490cc]" />
      <div className="w-px bg-[#b0d6e6]" />
    </div>
    <div className="flex-1 bg-[#ececec] border-l border-[#f8f8f8] flex flex-col items-center">
      <Arrow dir="up" s={3} className="mt-[7px]" />
      <div className="w-[14px] h-[54px] mt-[126px] rounded-[1px] border border-[#8a8a8a] bg-[linear-gradient(90deg,#f6f6f6,#dcdcdc_50%,#c3c3c3)] flex items-center justify-center">
        <Grip vertical />
      </div>
      <div className="flex-1" />
      <Arrow dir="down" s={3} className="mb-[6px]" />
    </div>
  </div>
);

const DocumentWindow = () => (
  <div className="h-[495px] shrink-0 w-[1012px] border border-[#444] rounded-t-[8px] flex flex-col overflow-hidden">
    <DocTabs />
    <SceneBar />
    <Timeline />
    <Stage />
    <div className="flex-1 bg-[#e9e9e9] border-t border-[#fafafa] flex items-center">
      <Arrow dir="left" s={3} className="ml-[5px]" />
      <div className="w-[512px] h-[14px] ml-[233px] border border-[#8a8a8a] rounded-[1px] bg-[linear-gradient(#ececec,#cfcfcf_60%,#bdbdbd)] flex items-center justify-center">
        <Grip />
      </div>
      <Arrow dir="right" s={3} className="ml-[230px]" />
    </div>
  </div>
);

/* ---------- properties inspector ---------- */

const Combo = ({ children, className = '' }) => (
  <div className={`w-[106px] h-[19px] border border-[#6d6d6d] rounded-[3px] bg-[linear-gradient(#f5f5f5,#e6e6e6_45%,#d4d4d4)] flex items-center justify-between pl-[2px] pr-[3px] ${className}`}>
    {children}
    <Arrow s={3.5} />
  </div>
);

const Field = ({ children, className = '' }) => (
  <div className={`h-[19px] bg-white border border-[#d5d5d5] border-t-[#a8a8a8] pl-[4px] leading-[17px] ${className}`}>{children}</div>
);

const Properties = () => (
  <div className="flex-1 bg-[#f1f0f1] flex flex-col text-[11px] tracking-[-0.45px] text-[#222] whitespace-nowrap">
    <div className="h-[56px] flex border-b border-[#bdbdbd]">
      <div className="w-[33px] h-[33px] ml-[5px] mt-[5px] border-t-2 border-l-2 border-[#222] flex items-center justify-center">
        <Svg w={24} h={24}>
          <rect x="1" y="1" width="22" height="22" rx="3" fill="#fff" stroke="#555" strokeWidth="1.500" />
          <rect x="3.500" y="3.500" width="17" height="17" fill="#3c3c3c" />
          {/* gears */}
          <circle cx="8" cy="16" r="5.500" fill="#777" stroke="#222" strokeDasharray="2 1.500" strokeWidth="1.500" />
          <circle cx="7.500" cy="16.500" r="2.300" fill="#333" />
          <path d="M12 3.500c-1 5 3 9.500 8.500 9V3.500z" fill="#e8e8e8" />
          <path d="M14.500 3.500c0 4 2 6 6 6.500" stroke="#555" strokeWidth="1.500" strokeDasharray="2 1.500" />
          <path d="M4 9l4-5M14 20l6-4" stroke="#ddd" strokeWidth="1.300" />
        </Svg>
      </div>
      <div className="ml-[13px] mt-[5px] w-[104px]">
        <div className="h-[19px] w-[104px] border-t border-b border-r border-[#777] border-r-[#bbb] rounded-tr-[3px] flex items-center">
          <span className="w-[3px] h-[10px] border-l border-b border-[#222]" />
          <span className="w-[82px] h-[10px] bg-[linear-gradient(#f1f0f1,#cfcfcf)] leading-[9px]">Movie Clip</span>
        </div>
        <div className="h-[20px] mt-[4px] bg-[#fdfdfd] border border-[#ddd] border-t-[#bbb] text-center text-[9.5px] leading-[17px] text-[#888] tracking-[-0.4px]">
          &lt;Instance Name&gt;
        </div>
      </div>
      <div className="w-px ml-[4px] mt-[5px] bg-[#888]" />
      <div className="w-[201px] pl-[5px] pt-[7.500px]">
        <div className="flex h-[14px] leading-[14px]">
          <span className="w-[75px] tracking-[-0.15px]">Instance of:</span>
          <span>Symbol 1</span>
        </div>
        <div className="w-[46px] h-[18px] mt-[9px] -ml-px border border-[#6d6d6d] rounded-[2px] bg-[linear-gradient(#f4f4f4,#d5d5d5)] leading-[16px] text-center tracking-[-0.2px]">Swap...</div>
      </div>
      <div className="w-px mt-[5px] bg-[#888]" />
      <div className="w-[43px] pr-[4px] pt-[8px] text-right">Color:</div>
      <Combo className="mt-[5px]">Alpha</Combo>
      <div className="relative flex ml-[38px] mt-[4px] h-[20px]">
        <div className="w-[35px] h-[20px] bg-white border border-[#bcd8e4] pl-[4px] leading-[18px]">0%</div>
        <div className="w-[12px] h-[20px] ml-[2px] border border-[#888] bg-[#e2e2e2] flex items-center justify-center">
          <Arrow s={3} />
        </div>
        {/* text cursor and tooltip */}
        <Svg w={8} h={16} className="absolute left-[16px] top-[5px]"><path d="M1 .5h2.500M4.500.5H7M4 1v14M1 15.500h6" stroke="#222" /></Svg>
        <div className="absolute z-10 left-[22px] top-[20px] w-[86px] h-[19px] bg-[linear-gradient(#fff,#e6e7f2)] border border-[#666] rounded-[2px] shadow-[2px_2px_2px_rgba(0,0,0,0.4)] text-center text-[12px] leading-[16px] text-[#555] tracking-[-0.5px] font-['Open_Sans',sans-serif]">
          Alpha Amount
        </div>
      </div>
      <div className="flex-1" />
      <div className="w-[18px] flex flex-col gap-[4px] pt-[2px]">
        <Svg w={13} h={13}>
          <circle cx="6.500" cy="6.500" r="5.500" fill="#fff" stroke="#222" /><path d="M4.800 5c0-2.500 3.600-2 3.400 0-.1 1-1.700 1-1.700 2.500M6.500 8.500v1.300" stroke="#222" strokeWidth="1.400" />
        </Svg>
        <Svg w={13} h={13}>
          <circle cx="6.500" cy="6.500" r="5.500" fill="#fff" stroke="#222" /><path d="M4 9l4.500-4.500M4.500 4.200h4.300v4.300" stroke="#222" strokeWidth="1.500" />
        </Svg>
      </div>
    </div>
    <div className="flex-1 flex">
      <Svg w={8} h={10} className="ml-[12px] mt-[22px]"><path d="M2 5V3a2 2 0 0 1 4 0" stroke="#111" strokeWidth="1.200" /><rect x="1" y="4.500" width="6.500" height="5" fill="#111" /></Svg>
      <div className="w-[139px] h-[48px] ml-px pl-[15px] pt-[4px] grid grid-cols-[15px_45px_15px_44px] auto-rows-[19px] gap-y-[4px] border-r border-[#888]">
        <span className="leading-[20px]">W:</span><Field>768.0</Field><span className="leading-[20px] pl-[4px]">X:</span><Field>0.0</Field>
        <span className="leading-[20px]">H:</span><Field>576.0</Field><span className="leading-[20px] pl-[4px]">Y:</span><Field>0.0</Field>
      </div>
      <div className="ml-[212px] w-[33px] pt-[7px]">Blend:</div>
      <div className="pt-[5px]">
        <Combo>Normal</Combo>
        <div className="flex items-center mt-[5px]">
          <div className="w-[13px] h-[13px] border border-[#999] bg-[linear-gradient(135deg,#d5d5d5,#fff)]" />
          <span className="ml-px leading-[14px] tracking-[-0.68px]">Use runtime bitmap caching</span>
        </div>
      </div>
      <div className="flex-1" />
      <div className="w-[18px] pt-[3px]">
        <Svg w={13} h={13}>
          <circle cx="6.500" cy="6.500" r="6" fill="#1f4f9c" /><circle cx="6.500" cy="3.200" r="1.300" fill="#fff" />
          <path d="M2.500 5.300h8M6.500 5v3L4.500 11M6.500 8l2 3" stroke="#fff" strokeWidth="1.400" />
        </Svg>
        <Svg w={9} h={6} className="mt-[24px] ml-[4px]"><path d="M1 5.500h7L4.500 1z" fill="#fff" stroke="#333" /></Svg>
      </div>
    </div>
  </div>
);

const Workspace = () => (
  <div className="w-[1024px] shrink-0 bg-[linear-gradient(90deg,#e8e8e8_0,#e8e8e8_1px,#6d6d6d_2px,#858585_7px,#8b8b8b_1017px,#6a6a6a_1024px)] pl-[7px] flex">
    <div className="w-[1012px] shrink-0 flex flex-col">
      <div className="h-[6px] shrink-0 -ml-[6px] -mr-[5px] bg-[linear-gradient(#8d93a0,#636363_40%,#6c6c6c)]" />
      <DocumentWindow />
      <div className="h-[7px] shrink-0 bg-[linear-gradient(#777,#a8a8a8)] flex justify-center">
        <div className="w-[46px] h-[5px] bg-[#a9a9a9] border border-[#d0d0d0] border-t-0 border-b-[#666] flex justify-center items-center">
          <Arrow s={3} color="#fff" />
        </div>
      </div>
      <div className="h-[17px] shrink-0 bg-[linear-gradient(#000_70%,#2e2e2e)] flex items-center text-white text-[11px] tracking-[-0.05px]">
        <Arrow dir="right" s={4} color="#fff" className="ml-[16px] mr-[6px]" />
        Actions
      </div>
      <div className="h-[3px] shrink-0 bg-[linear-gradient(#555,#b5b5b5_50%,#555)]" />
      <div className="h-[17px] shrink-0 bg-[linear-gradient(#000_60%,#3a3a3a)] flex items-center text-white text-[11px] tracking-[-0.35px] pr-[5px]">
        <Arrow s={4} color="#fff" className="ml-[13px] mr-[7px] mb-[5px]" />
        <div className="w-[64px] h-[16px] self-end rounded-tl-[4px] bg-[#f1f0f1] text-[#111] pl-[6px] leading-[16px] tracking-[-0.2px] [clip-path:polygon(0_0,86%_0,90%_10%,100%_100%,0_100%)]">
          Properties
        </div>
        <span className="ml-[7px] w-[36px]">Filters</span>
        <span className="w-px h-[12px] bg-[#ddd]" />
        <span className="ml-[7px] flex-1">Parameters</span>
        <PanelMenuIcon color="#e8e8e8" />
      </div>
      <Properties />
      <div className="h-[2px] shrink-0 bg-[#8f8f8f]" />
    </div>
    <div className="flex-1 flex flex-col justify-start">
      <div className="w-full h-[45px] mt-[301px] bg-[#a9a9a9] border-y border-[#666] flex items-center justify-center">
        <Arrow dir="left" s={2.5} color="#fff" />
      </div>
    </div>
  </div>
);

const SidePanel = () => (
  <div className="flex-1 bg-[#f1f1f1] border-r border-black flex flex-col text-white text-[11px]">
    {['Color', 'Library'].map((name) => (
      <div key={name} className="h-[19px] shrink-0 bg-[linear-gradient(#2a2a2a_0,#000_15%,#000_60%,#2c2c2c_84%,#555_88%,#b5b5b5_92%,#555)] flex items-center pl-[15px] leading-[17px]">
        <Arrow dir="right" s={4} color="#fff" className="mr-[6px]" />
        {name}
      </div>
    ))}
    <div className="flex-1" />
    <div className="h-[2px] bg-[#9a9a9a]" />
  </div>
);

export default function App() {
  return (
    <div className="relative w-[1280px] h-[720px] overflow-hidden flex flex-col bg-[#f1f1f1] font-['Open_Sans','Noto_Sans',sans-serif]">
      <Taskbar />
      <StartOrb />
      <TitleBar />
      <MenuBar />
      <div className="flex-1 min-h-0 flex font-['DejaVu_Sans_Condensed','DejaVu_Sans',sans-serif]">
        <ToolsPanel />
        <Workspace />
        <SidePanel />
      </div>
    </div>
  );
}
